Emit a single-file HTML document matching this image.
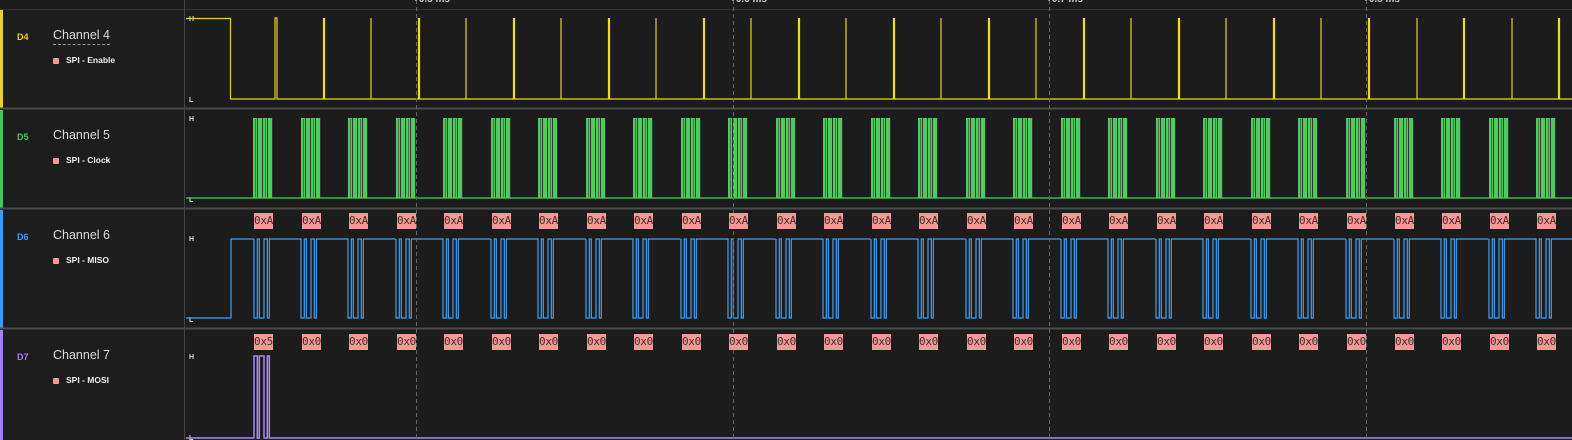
<!DOCTYPE html>
<html><head><meta charset="utf-8"><style>
*{margin:0;padding:0;box-sizing:border-box}
body{width:1572px;height:440px;background:#1c1c1c;overflow:hidden;position:relative;font-family:"Liberation Sans",sans-serif}
.lp{position:absolute;left:0;width:184px;background:#1d1d1d}
.bar{position:absolute;left:0;top:0;bottom:0;width:3px}
.d{position:absolute;left:17px;font-size:9px;font-weight:bold}
.ch{position:absolute;left:53px;font-size:12.5px;color:#dcdcdc}
.sq{position:absolute;left:53px;width:6px;height:6px;background:#f29896;border-radius:1px}
.an{position:absolute;left:66px;font-size:8.5px;color:#f0f0f0;font-weight:bold}
.lb{position:absolute;width:19px;height:16px;background:#f29a96;overflow:hidden;font-family:"DejaVu Sans Mono","Liberation Mono",monospace;font-size:11px;line-height:16px;color:#4a2a2a;white-space:nowrap;letter-spacing:-0.3px}
.r3 .lb{top:213px}
.r4 .lb{top:334px}
.tl{position:absolute;top:-6px;font-size:10px;font-weight:bold;color:#cfcfcf}
</style></head><body>
<div class="lp" style="top:10px;height:98px"><div class="bar" style="background:#e6d12a"></div>
<div class="d" style="top:22px;color:#e6d12a">D4</div><div class="ch" style="top:18px;border-bottom:1px dashed #999;padding-bottom:2px">Channel 4</div>
<div class="sq" style="top:48px"></div><div class="an" style="top:45px">SPI - Enable</div></div>
<div class="lp" style="top:110px;height:98px"><div class="bar" style="background:#4cc25c"></div>
<div class="d" style="top:22px;color:#4cc25c">D5</div><div class="ch" style="top:18px">Channel 5</div>
<div class="sq" style="top:48px"></div><div class="an" style="top:45px">SPI - Clock</div></div>
<div class="lp" style="top:210px;height:118px"><div class="bar" style="background:#3d9cf0"></div>
<div class="d" style="top:22px;color:#3d9cf0">D6</div><div class="ch" style="top:18px">Channel 6</div>
<div class="sq" style="top:48px"></div><div class="an" style="top:45px">SPI - MISO</div></div>
<div class="lp" style="top:330px;height:110px"><div class="bar" style="background:#a37ff0"></div>
<div class="d" style="top:22px;color:#a37ff0">D7</div><div class="ch" style="top:18px">Channel 7</div>
<div class="sq" style="top:48px"></div><div class="an" style="top:45px">SPI - MOSI</div></div>

<svg width="1572" height="440" style="position:absolute;left:0;top:0">
<defs>
<g id="clk">
<rect x="0" y="118" width="4.2" height="80" fill="#52c95f"/>
<rect x="5" y="118" width="4.2" height="80" fill="#52c95f"/>
<rect x="10" y="118" width="4.2" height="80" fill="#52c95f"/>
<rect x="15" y="118" width="4.2" height="80" fill="#52c95f"/>
<line x1="2.5" y1="119" x2="2.5" y2="197" stroke="#2a2a2a" stroke-width="0.5"/>
<line x1="12.5" y1="119" x2="12.5" y2="197" stroke="#2a2a2a" stroke-width="0.5"/>
</g>
<path id="mi" d="M0,239 V318 H3.3 V239 H5.3 V318 H10 V239 H13.3 V318 H15.3 V239 H47.6" fill="none" stroke="#3fa0f5" stroke-width="1.2"/>
<line id="en1" x1="23" y1="99" x2="23" y2="18" stroke="#e6d12a" stroke-width="1.2"/>
<line id="en2" x1="23" y1="99" x2="23" y2="18" stroke="#f0da2a" stroke-width="2.2"/>
</defs>
<line x1="0" y1="9.5" x2="1572" y2="9.5" stroke="#333" stroke-width="1"/>
<line x1="0" y1="108.5" x2="1572" y2="108.5" stroke="#4a4a4a" stroke-width="2"/>
<line x1="0" y1="208.5" x2="1572" y2="208.5" stroke="#4a4a4a" stroke-width="2"/>
<line x1="0" y1="328.5" x2="1572" y2="328.5" stroke="#4a4a4a" stroke-width="2"/>
<line x1="184.5" y1="0" x2="184.5" y2="440" stroke="#444" stroke-width="1"/>
<g font-family="Liberation Sans" font-size="7" font-weight="bold" fill="#ddd">
<text x="189" y="21">H</text><text x="189" y="102">L</text>
<text x="189" y="121">H</text><text x="189" y="202">L</text>
<text x="189" y="241">H</text><text x="189" y="322">L</text>
<text x="189" y="359">H</text><text x="189" y="440">L</text>
</g>
<path d="M186,18.5 H230.5 V99 H275 V18 H277 V99 H1572" fill="none" stroke="#e6d12a" stroke-width="1.2"/>
<g>
<use href="#en2" x="301"/><use href="#en1" x="348"/><use href="#en2" x="396"/><use href="#en1" x="443"/><use href="#en2" x="491"/><use href="#en1" x="538"/><use href="#en2" x="586"/><use href="#en1" x="633"/><use href="#en2" x="681"/><use href="#en1" x="728"/><use href="#en2" x="776"/><use href="#en1" x="823"/><use href="#en2" x="871"/><use href="#en1" x="918"/><use href="#en2" x="966"/><use href="#en1" x="1013"/><use href="#en2" x="1061"/><use href="#en1" x="1108"/><use href="#en2" x="1156"/><use href="#en1" x="1203"/><use href="#en2" x="1251"/><use href="#en1" x="1298"/><use href="#en2" x="1346"/><use href="#en1" x="1394"/><use href="#en2" x="1441"/><use href="#en1" x="1489"/><use href="#en2" x="1536"/>
</g>
<line x1="186" y1="198" x2="1572" y2="198" stroke="#52c95f" stroke-width="1.2"/>
<g>
<use href="#clk" x="253"/><use href="#clk" x="301"/><use href="#clk" x="348"/><use href="#clk" x="396"/><use href="#clk" x="443"/><use href="#clk" x="491"/><use href="#clk" x="538"/><use href="#clk" x="586"/><use href="#clk" x="633"/><use href="#clk" x="681"/><use href="#clk" x="728"/><use href="#clk" x="776"/><use href="#clk" x="823"/><use href="#clk" x="871"/><use href="#clk" x="918"/><use href="#clk" x="966"/><use href="#clk" x="1013"/><use href="#clk" x="1061"/><use href="#clk" x="1108"/><use href="#clk" x="1156"/><use href="#clk" x="1203"/><use href="#clk" x="1251"/><use href="#clk" x="1298"/><use href="#clk" x="1346"/><use href="#clk" x="1394"/><use href="#clk" x="1441"/><use href="#clk" x="1489"/><use href="#clk" x="1536"/>
</g>
<path d="M186,318 H231 V239 H254" fill="none" stroke="#3fa0f5" stroke-width="1.2"/>
<g>
<use href="#mi" x="254"/><use href="#mi" x="301"/><use href="#mi" x="348"/><use href="#mi" x="396"/><use href="#mi" x="443"/><use href="#mi" x="491"/><use href="#mi" x="538"/><use href="#mi" x="586"/><use href="#mi" x="633"/><use href="#mi" x="681"/><use href="#mi" x="728"/><use href="#mi" x="776"/><use href="#mi" x="823"/><use href="#mi" x="871"/><use href="#mi" x="918"/><use href="#mi" x="966"/><use href="#mi" x="1013"/><use href="#mi" x="1061"/><use href="#mi" x="1108"/><use href="#mi" x="1156"/><use href="#mi" x="1203"/><use href="#mi" x="1251"/><use href="#mi" x="1298"/><use href="#mi" x="1346"/><use href="#mi" x="1394"/><use href="#mi" x="1441"/><use href="#mi" x="1489"/><use href="#mi" x="1536"/>
</g>
<path d="M186,438 H254 V356 H257.3 V438 H259.3 V356 H264 V438 H267.3 V356 H269.3 V438 H1572" fill="none" stroke="#a98cf2" stroke-width="1.5"/>
<g stroke="#666" stroke-dasharray="4,3" stroke-width="1">
<line x1="416.5" y1="0" x2="416.5" y2="440"/><line x1="733.5" y1="0" x2="733.5" y2="440"/><line x1="1049.5" y1="0" x2="1049.5" y2="440"/><line x1="1366.5" y1="0" x2="1366.5" y2="440"/>
</g>
</svg>
<div class="tl" style="left:413px">+0.5 ms</div>
<div class="tl" style="left:730px">+0.6 ms</div>
<div class="tl" style="left:1046px">+0.7 ms</div>
<div class="tl" style="left:1363px">+0.8 ms</div>
<div class="r3">
<div class="lb" style="left:254px">0xA</div><div class="lb" style="left:302px">0xA</div><div class="lb" style="left:349px">0xA</div><div class="lb" style="left:397px">0xA</div><div class="lb" style="left:444px">0xA</div><div class="lb" style="left:492px">0xA</div><div class="lb" style="left:539px">0xA</div><div class="lb" style="left:587px">0xA</div><div class="lb" style="left:634px">0xA</div><div class="lb" style="left:682px">0xA</div><div class="lb" style="left:729px">0xA</div><div class="lb" style="left:777px">0xA</div><div class="lb" style="left:824px">0xA</div><div class="lb" style="left:872px">0xA</div><div class="lb" style="left:919px">0xA</div><div class="lb" style="left:967px">0xA</div><div class="lb" style="left:1014px">0xA</div><div class="lb" style="left:1062px">0xA</div><div class="lb" style="left:1109px">0xA</div><div class="lb" style="left:1157px">0xA</div><div class="lb" style="left:1204px">0xA</div><div class="lb" style="left:1252px">0xA</div><div class="lb" style="left:1299px">0xA</div><div class="lb" style="left:1347px">0xA</div><div class="lb" style="left:1395px">0xA</div><div class="lb" style="left:1442px">0xA</div><div class="lb" style="left:1490px">0xA</div><div class="lb" style="left:1537px">0xA</div>
</div>
<div class="r4">
<div class="lb" style="left:254px">0x5</div><div class="lb" style="left:302px">0x0</div><div class="lb" style="left:349px">0x0</div><div class="lb" style="left:397px">0x0</div><div class="lb" style="left:444px">0x0</div><div class="lb" style="left:492px">0x0</div><div class="lb" style="left:539px">0x0</div><div class="lb" style="left:587px">0x0</div><div class="lb" style="left:634px">0x0</div><div class="lb" style="left:682px">0x0</div><div class="lb" style="left:729px">0x0</div><div class="lb" style="left:777px">0x0</div><div class="lb" style="left:824px">0x0</div><div class="lb" style="left:872px">0x0</div><div class="lb" style="left:919px">0x0</div><div class="lb" style="left:967px">0x0</div><div class="lb" style="left:1014px">0x0</div><div class="lb" style="left:1062px">0x0</div><div class="lb" style="left:1109px">0x0</div><div class="lb" style="left:1157px">0x0</div><div class="lb" style="left:1204px">0x0</div><div class="lb" style="left:1252px">0x0</div><div class="lb" style="left:1299px">0x0</div><div class="lb" style="left:1347px">0x0</div><div class="lb" style="left:1395px">0x0</div><div class="lb" style="left:1442px">0x0</div><div class="lb" style="left:1490px">0x0</div><div class="lb" style="left:1537px">0x0</div>
</div>
</body></html>
